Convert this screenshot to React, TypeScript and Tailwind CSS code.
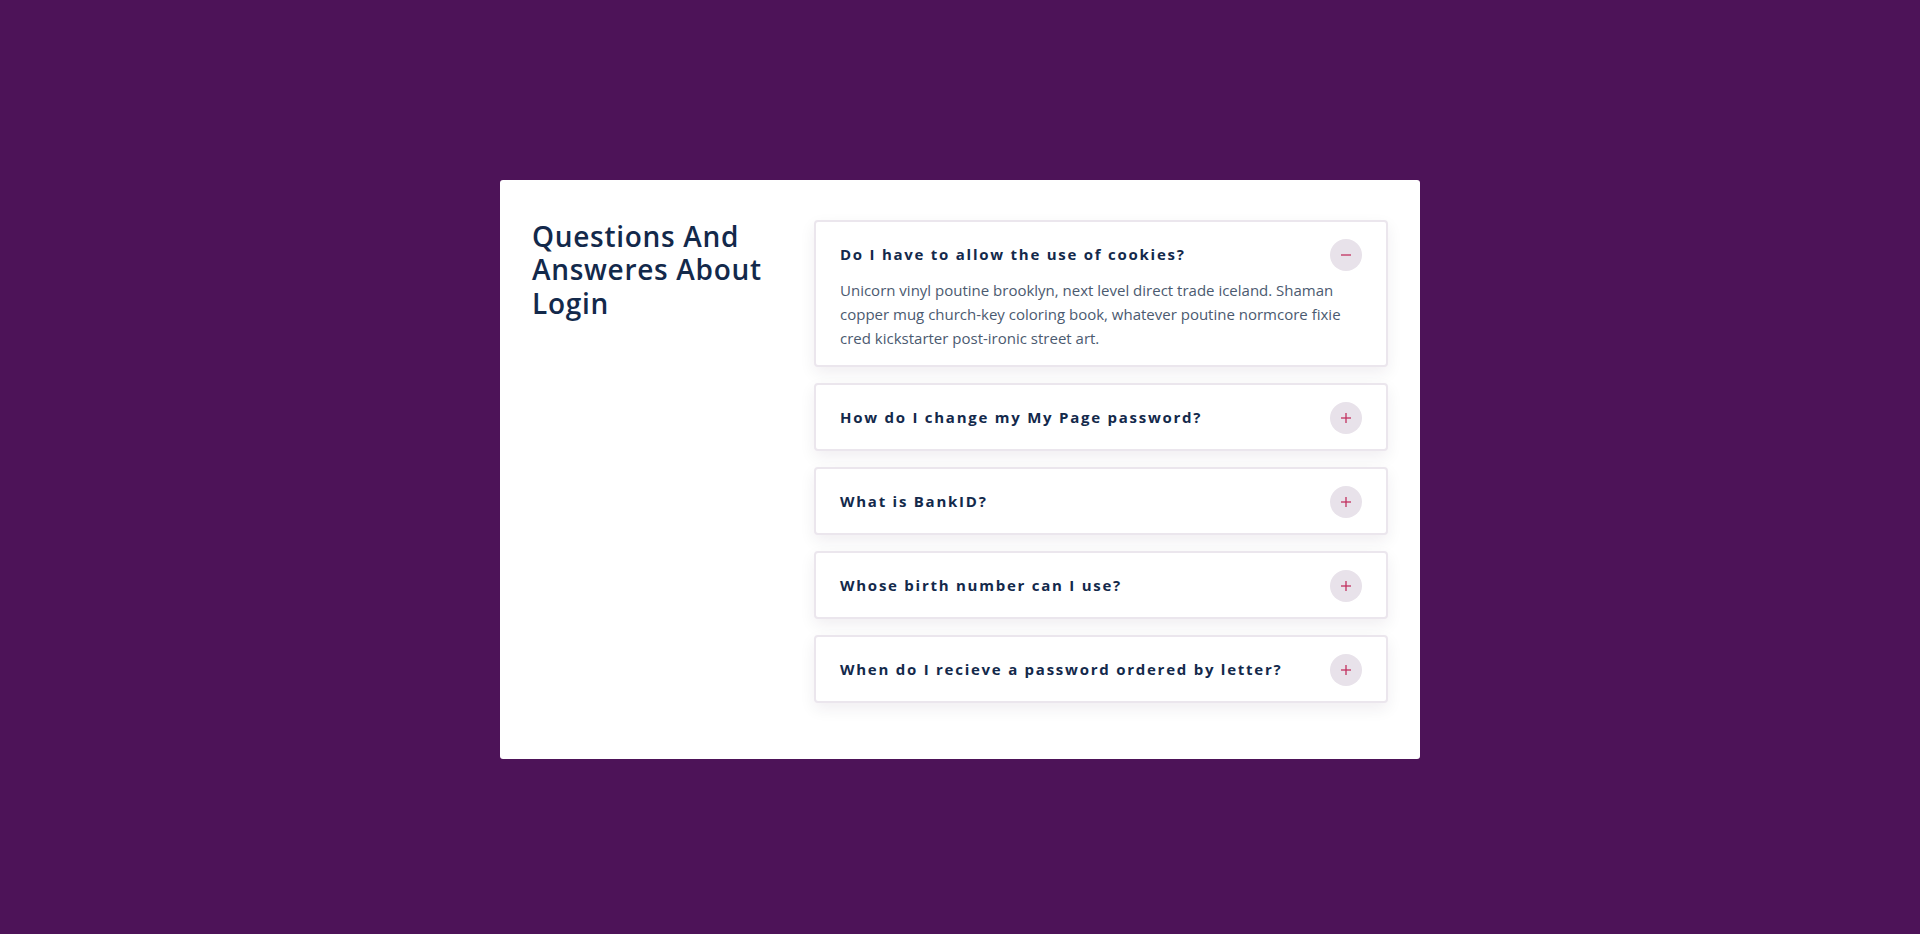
import { useState } from "react";

const faqs = [
  {
    q: "Do I have to allow the use of cookies?",
    a: "Unicorn vinyl poutine brooklyn, next level direct trade iceland. Shaman copper mug church-key coloring book, whatever poutine normcore fixie cred kickstarter post-ironic street art.",
  },
  {
    q: "How do I change my My Page password?",
    a: "Unicorn vinyl poutine brooklyn, next level direct trade iceland. Shaman copper mug church-key coloring book, whatever poutine normcore fixie cred kickstarter post-ironic street art.",
  },
  {
    q: "What is BankID?",
    a: "Unicorn vinyl poutine brooklyn, next level direct trade iceland. Shaman copper mug church-key coloring book, whatever poutine normcore fixie cred kickstarter post-ironic street art.",
  },
  {
    q: "Whose birth number can I use?",
    a: "Unicorn vinyl poutine brooklyn, next level direct trade iceland. Shaman copper mug church-key coloring book, whatever poutine normcore fixie cred kickstarter post-ironic street art.",
  },
  {
    q: "When do I recieve a password ordered by letter?",
    a: "Unicorn vinyl poutine brooklyn, next level direct trade iceland. Shaman copper mug church-key coloring book, whatever poutine normcore fixie cred kickstarter post-ironic street art.",
  },
];

function Toggle({ open }: { open: boolean }) {
  return (
    <span className="flex h-8 w-8 shrink-0 items-center justify-center rounded-full bg-[#e8e2ea]">
      <svg width="12" height="12" viewBox="0 0 12 12" fill="none" stroke="#c2305f" strokeWidth="1.3">
        <path d="M1 6h10" />
        {!open && <path d="M6 1v10" />}
      </svg>
    </span>
  );
}

export default function App() {
  const [active, setActive] = useState<number | null>(0);

  return (
    <div className="flex min-h-screen items-center justify-center bg-[#4d1358] pt-1 font-['Open_Sans',sans-serif]">
      <div className="flex w-[920px] rounded-[3px] bg-white pt-10 pr-[30px] pb-14 pl-8">
        {/* Heading */}
        <div className="w-[282px] shrink-0">
          <h1 className="text-[28px] leading-[33.5px] font-semibold tracking-[0.7px] text-[#13294b]">
            Questions And
            <br />
            Answeres About
            <br />
            Login
          </h1>
        </div>

        {/* Accordion */}
        <div className="flex w-[574px] flex-col gap-4">
          {faqs.map((item, i) => {
            const open = active === i;
            return (
              <div
                key={i}
                className="rounded-[4px] border-2 border-[#ebe6ed] bg-white shadow-[0_6px_16px_rgba(40,20,50,0.07)]"
              >
                <button
                  onClick={() => setActive(open ? null : i)}
                  className="flex h-16 w-full items-center justify-between pt-[2px] pr-6 pl-6 text-left"
                >
                  <span className="text-[15px] font-bold tracking-[1.75px] text-[#13294b]">{item.q}</span>
                  <Toggle open={open} />
                </button>
                {open && (
                  <p className="-mt-[8px] pr-6 pb-[15px] pl-6 text-[15px] leading-6 text-[#4b5a70]">{item.a}</p>
                )}
              </div>
            );
          })}
        </div>
      </div>
    </div>
  );
}
